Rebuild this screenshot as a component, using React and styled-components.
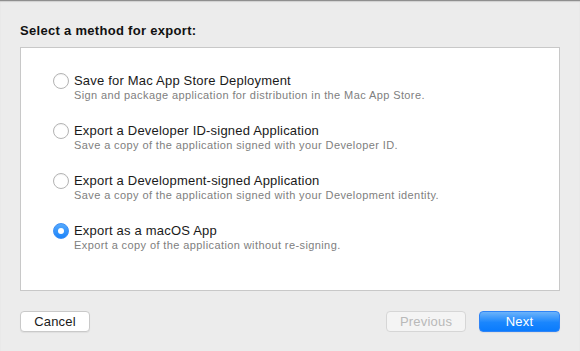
import React from "react";
import styled, { createGlobalStyle } from "styled-components";

const Global = createGlobalStyle`
   html, body {
      margin: 0;
      padding: 0;
      background: #ececec;
      font-family: "Liberation Sans", Arial, sans-serif;
      color: #1d1d1d;
   }
`

const Sheet = styled.div`
   width: 580px;
   height: 351px;
   box-sizing: border-box;
   border-top: 1px solid #8f8f8f;
   box-shadow: inset 0 1px 1px rgba(0,0,0,0.12);
   padding: 22px 20px 0 20px;
   display: flex;
   flex-direction: column;
`

const Title = styled.h1`
   margin: 0 0 8px 0;
   font-size: 13px;
   line-height: 16px;
   font-weight: bold;
   letter-spacing: 0.3px;
   color: #111;
`

const Panel = styled.div`
   height: 244px;
   box-sizing: border-box;
   background: #fff;
   border: 1px solid #c8c8c8;
   padding: 25px 0 0 32px;
   display: flex;
   flex-direction: column;
   gap: 21px;
`

const Option = styled.label`
   display: flex;
   align-items: flex-start;
   gap: 5px;
`

const Radio = styled.span`
   flex: none;
   width: 16px;
   height: 16px;
   box-sizing: border-box;
   border-radius: 50%;
   display: flex;
   align-items: center;
   justify-content: center;
   border: 1px solid ${p => p.checked ? "#3d8ff5" : "#b3b3b3"};
   background: ${p => p.checked ? "linear-gradient(#55a9fd, #1b84fb)" : "#fff"};
   box-shadow: ${p => p.checked ? "none" : "inset 0 1px 1px rgba(0,0,0,0.05)"};

   &::after {
      content: "";
      display: ${p => p.checked ? "block" : "none"};
      width: 6px;
      height: 6px;
      border-radius: 50%;
      background: #fff;
   }
`

const Texts = styled.div`
   display: flex;
   flex-direction: column;
`

const Label = styled.span`
   font-size: 13px;
   line-height: 16px;
   letter-spacing: 0.2px;
   color: #1a1a1a;
`

const Hint = styled.span`
   font-size: 11px;
   line-height: 13px;
   letter-spacing: 0.4px;
   color: #808080;
`

const Footer = styled.div`
   margin-top: 20px;
   display: flex;
   align-items: center;
`

const Button = styled.button`
   height: 21px;
   width: ${p => p.w}px;
   box-sizing: border-box;
   padding: 0;
   font-family: inherit;
   font-size: 13px;
   letter-spacing: 0.2px;
   border-radius: 4px;
   border: 1px solid #c9c9c9;
   background: #fff;
   color: #1a1a1a;
   box-shadow: 0 1px 1px rgba(0,0,0,0.06);

   &:disabled {
      color: #b9b9b9;
      background: #f4f4f4;
      border-color: #d6d6d6;
      box-shadow: none;
   }
`

const Primary = styled(Button)`
   border-color: #2f84f6;
   background: linear-gradient(#6cb3fa, #1a86fd 55%, #0a7bfd);
   color: #fff;
   margin-left: 13px;
`

const Spacer = styled.div`
   flex: 1;
`

const options = [
   { label: "Save for Mac App Store Deployment", hint: "Sign and package application for distribution in the Mac App Store." },
   { label: "Export a Developer ID-signed Application", hint: "Save a copy of the application signed with your Developer ID." },
   { label: "Export a Development-signed Application", hint: "Save a copy of the application signed with your Development identity." },
   { label: "Export as a macOS App", hint: "Export a copy of the application without re-signing.", checked: true },
]

export default function App() {
   return (
      <>
         <Global />
         <Sheet>
            <Title>Select a method for export:</Title>
            <Panel>
               {options.map(o => (
                  <Option key={o.label}>
                     <Radio checked={o.checked} />
                     <Texts>
                        <Label>{o.label}</Label>
                        <Hint>{o.hint}</Hint>
                     </Texts>
                  </Option>
               ))}
            </Panel>
            <Footer>
               <Button w={70}>Cancel</Button>
               <Spacer />
               <Button w={80} disabled>Previous</Button>
               <Primary w={81}>Next</Primary>
            </Footer>
         </Sheet>
      </>
   );
}
